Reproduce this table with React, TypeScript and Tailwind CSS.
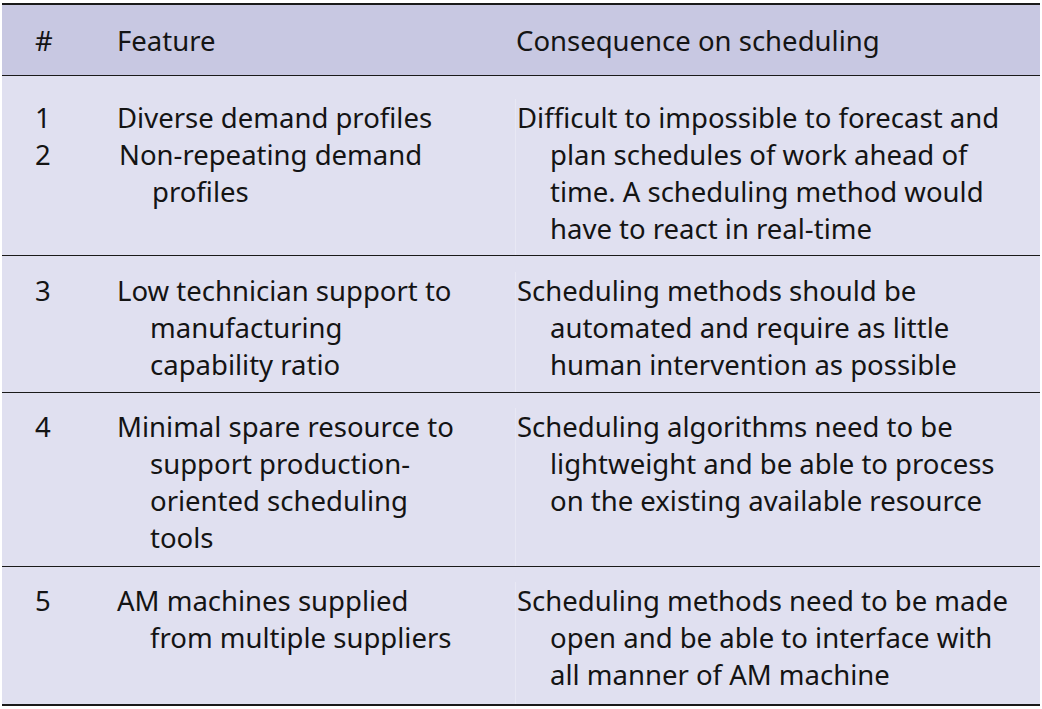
const rows = [
  {
    pt: 'pt-[23px]',
    h: 'h-[180px]',
    nums: ['1', '2'],
    feature: [['Diverse demand profiles'], ['Non-repeating demand', 'profiles']],
    consequence: [
      'Difficult to impossible to forecast and',
      'plan schedules of work ahead of',
      'time. A scheduling method would',
      'have to react in real-time',
    ],
  },
  {
    pt: 'pt-[16px]',
    h: 'h-[137px]',
    nums: ['3'],
    feature: [['Low technician support to', 'manufacturing', 'capability ratio']],
    consequence: [
      'Scheduling methods should be',
      'automated and require as little',
      'human intervention as possible',
    ],
  },
  {
    pt: 'pt-[15px]',
    h: 'h-[174px]',
    nums: ['4'],
    feature: [['Minimal spare resource to', 'support production-', 'oriented scheduling', 'tools']],
    consequence: [
      'Scheduling algorithms need to be',
      'lightweight and be able to process',
      'on the existing available resource',
    ],
  },
  {
    pt: 'pt-[15px]',
    h: 'h-[137px]',
    nums: ['5'],
    feature: [['AM machines supplied', 'from multiple suppliers']],
    consequence: [
      'Scheduling methods need to be made',
      'open and be able to interface with',
      'all manner of AM machine',
    ],
  },
]

function Lines({ lines }: { lines: string[] }) {
  return (
    <div>
      {lines.map((l, i) => (
        <div key={i} className={i === 0 ? 'whitespace-nowrap' : 'whitespace-nowrap pl-[33px]'}>
          {l}
        </div>
      ))}
    </div>
  )
}

export default function App() {
  return (
    <div
      className="w-[1042px] h-[709px] overflow-hidden bg-white pt-[3px] text-[27.5px] leading-[37px] text-[#141414]"
      style={{ fontFamily: '"Noto Sans", sans-serif' }}
    >
      <div className="mx-[2px] border-t-2 border-b-2 border-[#1a1a1a] bg-[#e0e0f0]">
        <div className="grid grid-cols-[115px_398px_1fr] h-[71px] items-center bg-[#c8c8e2] border-b-[1.5px] border-[#1a1a1a]">
          <div className="pl-[33px]">#</div>
          <div>Feature</div>
          <div className="pl-px">Consequence on scheduling</div>
        </div>
        {rows.map((r, i) => (
          <div
            key={i}
            className={
              'grid grid-cols-[115px_398px_1fr] ' +
              r.pt +
              ' ' +
              r.h +
              (i < rows.length - 1 ? ' border-b-[1.5px] border-[#1a1a1a]' : '')
            }
          >
            <div className="pl-[33px]">
              {r.nums.map((n) => (
                <div key={n}>{n}</div>
              ))}
            </div>
            <div>
              {r.feature.map((f, j) => (
                <div key={j} className={j > 0 ? 'pl-[2px]' : ''}>
                  <Lines lines={f} />
                </div>
              ))}
            </div>
            <div className="pl-px border-l border-[#e8e8f4]">
              <Lines lines={r.consequence} />
            </div>
          </div>
        ))}
      </div>
    </div>
  )
}
